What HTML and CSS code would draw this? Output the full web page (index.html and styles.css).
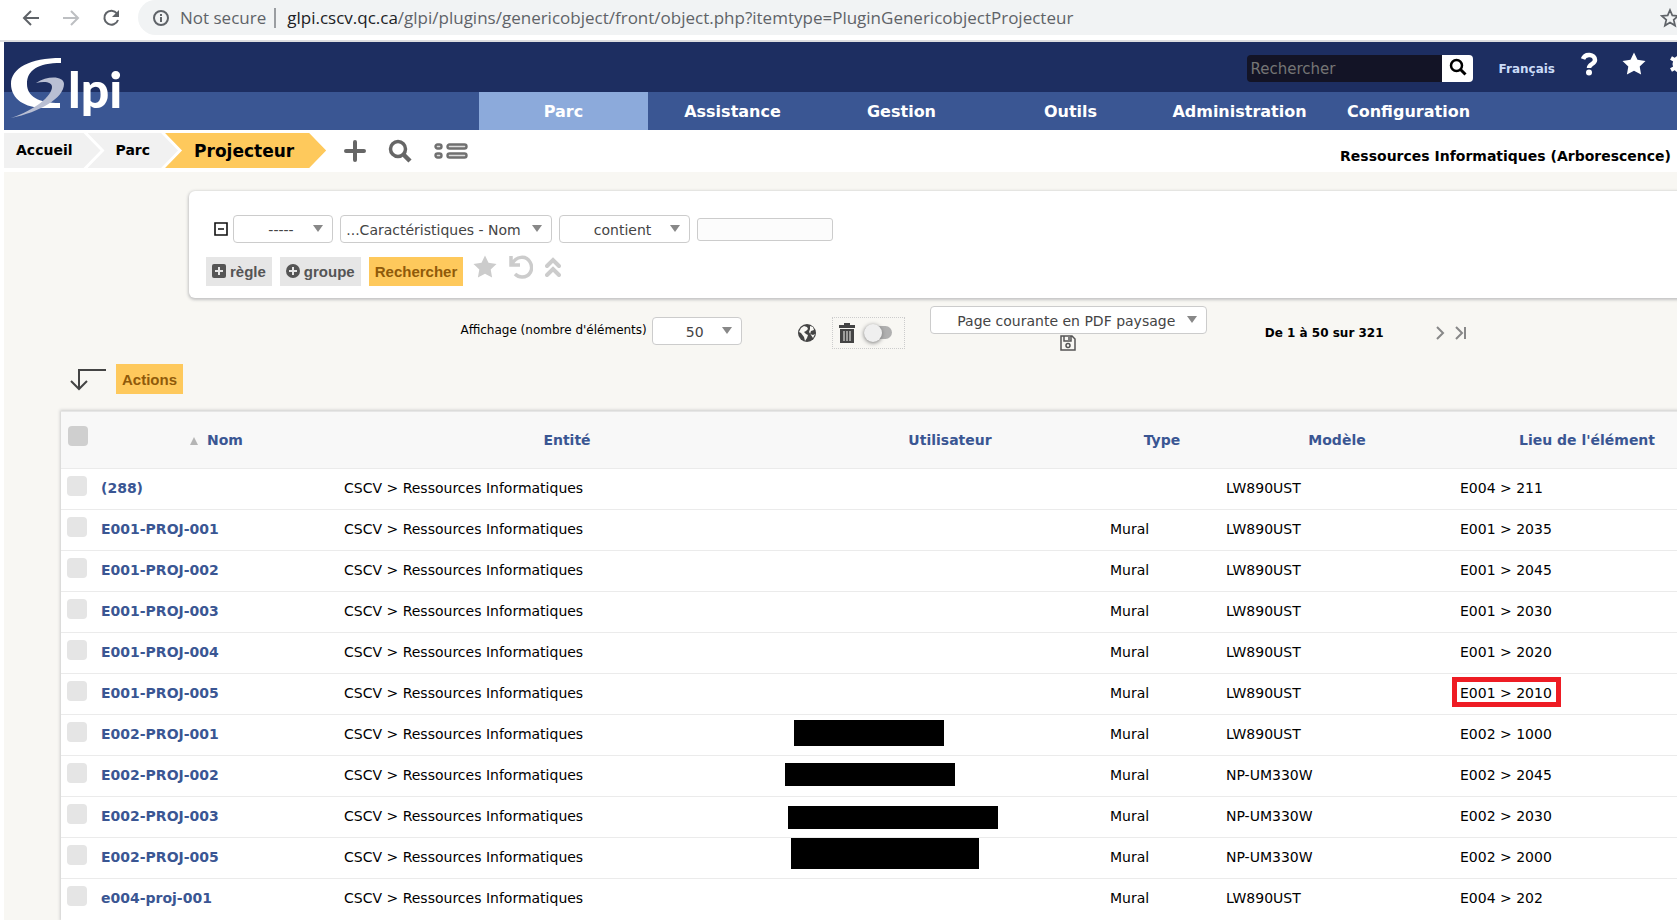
FILE: index.html
```html
<!DOCTYPE html>
<html lang="fr">
<head>
  <meta charset="UTF-8">
  <title>GLPI - Projecteur</title>
  <link rel="stylesheet" href="styles.css">
</head>
<body>
  <div class="browser-bar">
    <button class="browser-btn" aria-label="Back"><svg width="18" height="18" viewBox="0 0 18 18"><path d="M17 9H2M9 2L2 9l7 7" fill="none" stroke="#5f6368" stroke-width="2"/></svg></button>
    <button class="browser-btn" aria-label="Forward"><svg width="18" height="18" viewBox="0 0 18 18"><path d="M1 9h15M9 2l7 7-7 7" fill="none" stroke="#bdbfc2" stroke-width="2"/></svg></button>
    <button class="browser-btn" aria-label="Reload"><svg width="18" height="18" viewBox="0 0 18 18"><path d="M15 4.500A7 7 0 1 0 16 11" fill="none" stroke="#5f6368" stroke-width="2"/><path d="M17 1v7h-7z" fill="#5f6368"/></svg></button>
    <div class="address">
      <svg width="18" height="18" viewBox="0 0 18 18"><circle cx="9" cy="9" r="7" fill="none" stroke="#5f6368" stroke-width="2"/><path d="M9 8v5M9 5v2" stroke="#5f6368" stroke-width="2"/></svg>
      <span class="not-secure">Not secure</span>
      <span class="url"><b>glpi.cscv.qc.ca</b>/glpi/plugins/genericobject/front/object.php?itemtype=PluginGenericobjectProjecteur</span>
      <svg class="bookmark" width="20" height="20" viewBox="0 0 20 20"><path d="M10 2l2.300 5.400 5.900.500-4.500 3.900 1.400 5.800L10 14.500l-5.100 3.100 1.400-5.800L1.800 7.900l5.900-.5z" fill="none" stroke="#5f6368" stroke-width="1.700"/></svg>
    </div>
  </div>

  <div class="page">
    <header>
      <div class="top">
        <a href="#" class="logo" aria-label="GLPI">
          <svg width="120" height="66" viewBox="0 0 120 66">
            <path d="M51 2C20 2 1 12 1 28c0 15 14 24 33 24h16v-5C28 47 17 40 17 28 17 14 28 7 51 7z" fill="#fff"/>
            <path d="M26 27c12-8 28-7 28 1C54 42 30 56 1 62c24-8 41-22 41-31 0-5-7-6-16-4z" fill="#b9bfd3"/>
            <text x="58" y="52" class="logo-text">lpi</text>
          </svg>
        </a>
        <div class="tools">
          <form class="global-search">
            <input type="text" placeholder="Rechercher" aria-label="Rechercher">
            <button type="button" aria-label="Lancer la recherche"><svg width="18" height="18" viewBox="0 0 18 18"><circle cx="7.500" cy="7.500" r="5.500" fill="none" stroke="#000" stroke-width="2.500"/><path d="M11.500 11.500l5 5" stroke="#000" stroke-width="3"/></svg></button>
          </form>
          <a href="#" class="lang">Français</a>
          <a href="#" class="tool-icon help" aria-label="Aide"><svg width="18" height="24" viewBox="0 0 18 24"><path d="M3 7c2-6 12-5 12 1 0 4-6 4-6 8" fill="none" stroke="#fff" stroke-width="4.500"/><circle cx="9" cy="20.500" r="3" fill="#fff"/></svg></a>
          <a href="#" class="tool-icon" aria-label="Favoris"><svg width="24" height="24" viewBox="0 0 24 24"><path d="M12 .500l3.500 7.300 8 1.100-5.800 5.600 1.400 8L12 18.700l-7.100 3.800 1.400-8L.5 8.900l8-1.100z" fill="#fff"/></svg></a>
          <a href="#" class="tool-icon gear" aria-label="Préférences"><svg width="24" height="24" viewBox="0 0 24 24"><circle cx="12" cy="12" r="7" fill="none" stroke="#fff" stroke-width="5"/><path d="M12 0v24M1 6l22 12M1 18L23 6" stroke="#fff" stroke-width="4"/><circle cx="12" cy="12" r="4" fill="#1d2e61"/></svg></a>
        </div>
      </div>
      <nav class="menu">
        <a href="#" class="active">Parc</a>
        <a href="#">Assistance</a>
        <a href="#">Gestion</a>
        <a href="#">Outils</a>
        <a href="#">Administration</a>
        <a href="#">Configuration</a>
      </nav>
      <div class="crumb-bar">
        <a href="#" class="crumb crumb-first">Accueil</a>
        <a href="#" class="crumb">Parc</a>
        <a href="#" class="crumb crumb-current">Projecteur</a>
        <div class="crumb-icons">
          <a href="#" aria-label="Ajouter"><svg width="22" height="22" viewBox="0 0 22 22"><path d="M11 2v18M2 11h18" stroke="#666" stroke-width="4" stroke-linecap="round"/></svg></a>
          <a href="#" aria-label="Rechercher"><svg width="24" height="24" viewBox="0 0 24 24"><circle cx="10" cy="10" r="7.500" fill="none" stroke="#666" stroke-width="3.500"/><path d="M16 16l6 6" stroke="#666" stroke-width="4.500"/></svg></a>
          <a href="#" aria-label="Liste"><svg width="34" height="18" viewBox="0 0 34 18"><g fill="#ddd" stroke="#707070" stroke-width="2.400"><rect x="1.500" y="2.500" width="6" height="4" rx="2"/><rect x="13.500" y="2.500" width="19" height="4" rx="2"/><rect x="1.500" y="11.500" width="6" height="4" rx="2"/><rect x="13.500" y="11.500" width="19" height="4" rx="2"/></g></svg></a>
        </div>
        <a href="#" class="entity">Ressources Informatiques (Arborescence)</a>
      </div>
    </header>

    <main>
      <form class="criteria">
        <div class="criteria-row">
          <button type="button" class="minus" aria-label="Supprimer la règle"><svg width="14" height="14" viewBox="0 0 14 14"><path d="M1 1h12v12H1zM4 7h6" fill="none" stroke="#111" stroke-width="1.600"/></svg></button>
          <span class="dropdown w-link"><select aria-label="Lien"><option>-----</option></select></span>
          <span class="dropdown w-field"><select aria-label="Champ"><option>...Caractéristiques - Nom</option></select></span>
          <span class="dropdown w-type"><select aria-label="Type de recherche"><option>contient</option></select></span>
          <input type="text" class="value" aria-label="Valeur">
        </div>
        <div class="criteria-row">
          <button type="button" class="btn btn-grey"><svg width="14" height="14" viewBox="0 0 14 14"><rect width="14" height="14" rx="2" fill="#555"/><path d="M7 3v8M3 7h8" stroke="#e6e6e6" stroke-width="2"/></svg>règle</button>
          <button type="button" class="btn btn-grey"><svg width="14" height="14" viewBox="0 0 14 14"><circle cx="7" cy="7" r="7" fill="#555"/><path d="M7 3v8M3 7h8" stroke="#e6e6e6" stroke-width="2"/></svg>groupe</button>
          <button type="button" class="btn">Rechercher</button>
          <div class="criteria-icons">
            <a href="#" aria-label="Enregistrer"><svg width="24" height="24" viewBox="0 0 24 24"><path d="M12 .500l3.500 7.300 8 1.100-5.800 5.600 1.400 8L12 18.700l-7.100 3.800 1.400-8L.5 8.900l8-1.100z" fill="#ccc"/></svg></a>
            <a href="#" aria-label="Réinitialiser"><svg width="24" height="24" viewBox="0 0 24 24"><path d="M2 1v9h9M3 9C7 1 17 0 21 7s0 15-8 15c-3 0-5-1-7-3" fill="none" stroke="#ccc" stroke-width="3.500"/></svg></a>
            <a href="#" aria-label="Replier"><svg width="16" height="20" viewBox="0 0 16 20"><path d="M2 9l6-6 6 6M2 18l6-6 6 6" fill="none" stroke="#ccc" stroke-width="4" stroke-linecap="round"/></svg></a>
          </div>
        </div>
      </form>

      <div class="pager">
        <div class="page-size">
          <label for="limit">Affichage (nombre d'éléments)</label>
          <span class="dropdown w-limit"><select id="limit"><option>50</option></select></span>
        </div>
        <a href="#" class="globe" aria-label="Carte"><svg width="18" height="18" viewBox="0 0 18 18"><circle cx="9" cy="9" r="9" fill="#444"/><path d="M3 4l3-2 3 1 1 2-2 2-2 1 2 2 2 1-1 3-2 3-1-4-3-4-2-1zM12 2l3 1 1 3-3 1-1 3 3 1 2-1-2 4-2-3-2-3 1-3z" fill="#f8f7f3"/></svg></a>
        <label class="trash">
          <svg width="18" height="20" viewBox="0 0 18 20"><path d="M6 0h6v2h5v3H1V2h5zM2 6h14v14H2z" fill="#444"/><path d="M6 8v10M9 8v10M12 8v10" stroke="#f8f7f3"/></svg>
          <input type="checkbox" aria-label="Afficher la corbeille">
        </label>
        <div class="export">
          <span class="dropdown w-export"><select aria-label="Format d'export"><option>Page courante en PDF paysage</option></select></span>
          <button type="button" aria-label="Exporter"><svg width="16" height="16" viewBox="0 0 16 16"><path d="M1 1h11l3 3v11H1zM4 1v5h7V1M9 2v3" fill="none" stroke="#555" stroke-width="1.500"/><circle cx="8" cy="10.500" r="2" fill="none" stroke="#555" stroke-width="1.500"/></svg></button>
        </div>
        <b class="count">De 1 à 50 sur 321</b>
        <div class="arrows">
          <a href="#" aria-label="Suivant"><svg width="10" height="14" viewBox="0 0 10 14"><path d="M2 1l6 6-6 6" fill="none" stroke="#888" stroke-width="2"/></svg></a>
          <a href="#" aria-label="Fin"><svg width="12" height="14" viewBox="0 0 12 14"><path d="M1 1l6 6-6 6M10 1v12" fill="none" stroke="#888" stroke-width="2"/></svg></a>
        </div>
      </div>

      <div class="massive">
        <svg width="38" height="24" viewBox="0 0 38 24"><path d="M36 3H9v18M1 14l8 8 8-8" fill="none" stroke="#444" stroke-width="2"/></svg>
        <button type="button" class="btn">Actions</button>
      </div>

      <table class="results">
        <colgroup>
          <col class="c-check"><col class="c-name"><col class="c-entity"><col class="c-user"><col class="c-type"><col class="c-model"><col>
        </colgroup>
        <thead>
          <tr>
            <th><input type="checkbox" aria-label="Tout cocher"></th>
            <th><a href="#" class="sorted">Nom</a></th>
            <th><a href="#">Entité</a></th>
            <th><a href="#">Utilisateur</a></th>
            <th><a href="#">Type</a></th>
            <th><a href="#">Modèle</a></th>
            <th><a href="#">Lieu de l'élément</a></th>
          </tr>
        </thead>
        <tbody>
          <tr>
            <td><input type="checkbox" aria-label="(288)"></td>
            <td><a href="#">(288)</a></td>
            <td>CSCV &gt; Ressources Informatiques</td>
            <td></td>
            <td></td>
            <td>LW890UST</td>
            <td>E004 &gt; 211</td>
          </tr>
          <tr>
            <td><input type="checkbox" aria-label="E001-PROJ-001"></td>
            <td><a href="#">E001-PROJ-001</a></td>
            <td>CSCV &gt; Ressources Informatiques</td>
            <td></td>
            <td>Mural</td>
            <td>LW890UST</td>
            <td>E001 &gt; 2035</td>
          </tr>
          <tr>
            <td><input type="checkbox" aria-label="E001-PROJ-002"></td>
            <td><a href="#">E001-PROJ-002</a></td>
            <td>CSCV &gt; Ressources Informatiques</td>
            <td></td>
            <td>Mural</td>
            <td>LW890UST</td>
            <td>E001 &gt; 2045</td>
          </tr>
          <tr>
            <td><input type="checkbox" aria-label="E001-PROJ-003"></td>
            <td><a href="#">E001-PROJ-003</a></td>
            <td>CSCV &gt; Ressources Informatiques</td>
            <td></td>
            <td>Mural</td>
            <td>LW890UST</td>
            <td>E001 &gt; 2030</td>
          </tr>
          <tr>
            <td><input type="checkbox" aria-label="E001-PROJ-004"></td>
            <td><a href="#">E001-PROJ-004</a></td>
            <td>CSCV &gt; Ressources Informatiques</td>
            <td></td>
            <td>Mural</td>
            <td>LW890UST</td>
            <td>E001 &gt; 2020</td>
          </tr>
          <tr>
            <td><input type="checkbox" aria-label="E001-PROJ-005"></td>
            <td><a href="#">E001-PROJ-005</a></td>
            <td>CSCV &gt; Ressources Informatiques</td>
            <td></td>
            <td>Mural</td>
            <td>LW890UST</td>
            <td>E001 &gt; 2010<span class="highlight"></span></td>
          </tr>
          <tr>
            <td><input type="checkbox" aria-label="E002-PROJ-001"></td>
            <td><a href="#">E002-PROJ-001</a></td>
            <td>CSCV &gt; Ressources Informatiques</td>
            <td><span class="mask mask-1"></span></td>
            <td>Mural</td>
            <td>LW890UST</td>
            <td>E002 &gt; 1000</td>
          </tr>
          <tr>
            <td><input type="checkbox" aria-label="E002-PROJ-002"></td>
            <td><a href="#">E002-PROJ-002</a></td>
            <td>CSCV &gt; Ressources Informatiques</td>
            <td><span class="mask mask-2"></span></td>
            <td>Mural</td>
            <td>NP-UM330W</td>
            <td>E002 &gt; 2045</td>
          </tr>
          <tr>
            <td><input type="checkbox" aria-label="E002-PROJ-003"></td>
            <td><a href="#">E002-PROJ-003</a></td>
            <td>CSCV &gt; Ressources Informatiques</td>
            <td><span class="mask mask-3"></span></td>
            <td>Mural</td>
            <td>NP-UM330W</td>
            <td>E002 &gt; 2030</td>
          </tr>
          <tr>
            <td><input type="checkbox" aria-label="E002-PROJ-005"></td>
            <td><a href="#">E002-PROJ-005</a></td>
            <td>CSCV &gt; Ressources Informatiques</td>
            <td><span class="mask mask-4"></span></td>
            <td>Mural</td>
            <td>NP-UM330W</td>
            <td>E002 &gt; 2000</td>
          </tr>
          <tr>
            <td><input type="checkbox" aria-label="e004-proj-001"></td>
            <td><a href="#">e004-proj-001</a></td>
            <td>CSCV &gt; Ressources Informatiques</td>
            <td></td>
            <td>Mural</td>
            <td>LW890UST</td>
            <td>E004 &gt; 202</td>
          </tr>
        </tbody>
      </table>
    </main>
  </div>
</body>
</html>
```
FILE: styles.css
```css
* { box-sizing: border-box; }
html { overflow: hidden; }
body { margin: 0; background: #fff; font-family: "DejaVu Sans", Verdana, sans-serif; font-size: 14px; color: #000; overflow: hidden; }
a { color: inherit; text-decoration: none; }
button { border: none; background: none; padding: 0; cursor: pointer; }
svg { display: block; flex: none; }

/* browser toolbar */
.browser-bar { display: flex; align-items: center; height: 42px; padding: 0 0 5px 22px; border-bottom: 2px solid #dcdde0; font-family: "Open Sans", "Noto Sans", sans-serif; font-size: 17px; }
.browser-btn { margin-right: 22px; }
.browser-btn + .browser-btn + .browser-btn { margin-right: 18px; }
.address { display: flex; flex: 1; align-items: center; height: 35px; padding-left: 14px; background: #f1f3f4; border-radius: 18px 0 0 18px; color: #5f6368; white-space: nowrap; }
.not-secure { margin-left: 10px; padding-right: 8px; border-right: 2px solid #9a9da1; line-height: 20px; }
.url { margin-left: 11px; }
.url b { font-weight: normal; color: #202124; }
.bookmark { margin-left: auto; margin-right: -3px; }

/* header */
.page { margin-left: 4px; background: #f8f7f3; min-height: calc(100vh - 42px); overflow: hidden; }
.top { display: flex; justify-content: space-between; height: 50px; background: #1d2e61; }
.logo { padding: 14px 0 0 6px; z-index: 1; }
.logo-text { font: 900 50px Lato, sans-serif; fill: #fff; }
.tools { display: flex; align-items: center; height: 50px; margin-right: -17px; padding-top: 3px; }
.global-search { display: flex; height: 27px; margin-right: 26px; border-radius: 4px; overflow: hidden; }
.global-search input { width: 195px; border: none; padding: 0 4px; background: #131426; color: #ccc; font: 15px "DejaVu Sans", sans-serif; }
.global-search input::placeholder { color: #757575; }
.global-search button { width: 31px; background: #fff; padding: 0 0 4px 7px; }
.lang { margin-right: 25px; font-size: 12px; font-weight: bold; color: #cbdcf8; }
.tool-icon { margin-bottom: 9px; margin-right: 24px; }
.gear { margin-right: 0; }
.menu { display: flex; justify-content: center; height: 38px; padding-left: 306px; padding-right: 15px; background: #3a5693; }
.menu a { width: 169px; line-height: 39px; text-align: center; color: #fff; font-size: 16px; font-weight: bold; }
.menu a.active { background: #8caadb; }

/* breadcrumb */
.crumb-bar { display: flex; align-items: center; height: 42px; padding: 3px 6px 4px 0; background: #fff; font-weight: bold; }
.crumb { height: 35px; margin-left: -13px; padding: 0 28px; line-height: 34px; background: #f1f1f1; clip-path: polygon(0 0, calc(100% - 17px) 0, 100% 50%, calc(100% - 17px) 100%, 0 100%, 17px 50%); }
.crumb-first { margin-left: 0; padding: 0 28px 0 12px; clip-path: polygon(0 0, calc(100% - 17px) 0, 100% 50%, calc(100% - 17px) 100%, 0 100%); }
.crumb-current { padding: 0 32px 0 29px; line-height: 37px; font-size: 17px; background: #fec95c; }
.crumb-icons { display: flex; align-items: center; gap: 22px; margin-left: 18px; }
.entity { margin-left: auto; padding-top: 10px; }

/* form controls */
.dropdown { position: relative; display: inline-block; height: 28px; }
.dropdown::after { content: ""; position: absolute; right: 10px; top: 10px; border: 5px solid transparent; border-top: 7px solid #888; border-bottom: none; pointer-events: none; }
.dropdown select { appearance: none; width: 100%; height: 100%; padding: 2px 24px 0 20px; border: 1px solid #ccc; border-radius: 4px; background: #fff; color: #444; font: inherit; text-align: center; text-align-last: center; }
.w-link { width: 100px; }
.w-field { width: 212px; }
.w-field select { padding: 2px 28px 0 3px; }
.w-type { width: 131px; }
.w-limit { width: 90px; }
.w-export { width: 277px; }
.btn { display: flex; align-items: center; gap: 4px; height: 29px; padding: 0 6px; background: #fec95c; color: #8f5a0a; font: bold 15px "Liberation Sans", Arial, sans-serif; }
.btn-grey { background: #e6e6e6; color: #555; }

/* search criteria */
.criteria { display: flex; flex-direction: column; gap: 12px; height: 107px; margin: 19px -56px 0 185px; padding: 24px 17px 0; background: #fff; border-radius: 6px; box-shadow: 0 1px 3px 1px #c4c4c4; }
.criteria-row { display: flex; align-items: center; gap: 8px; }
.criteria-row .dropdown { margin-right: -1px; }
.minus { margin-left: 8px; margin-right: -3px; }
.value { width: 136px; height: 23px; border: 1px solid #ccc; border-radius: 3px; background: #fcfcfc; }
.criteria-icons { display: flex; align-items: center; gap: 12px; margin-left: 2px; padding-bottom: 8px; }

/* pager */
.pager { display: flex; justify-content: center; align-items: center; margin: 8px -56px 0 190px; white-space: nowrap; }
.page-size { display: flex; align-items: center; gap: 5px; padding-bottom: 4px; }
.page-size label { padding-bottom: 2px; font-size: 12px; }
.globe { margin-left: 56px; }
.trash { display: flex; align-items: center; gap: 8px; width: 73px; height: 32px; margin-left: 16px; padding-left: 5px; border: 1px dotted #ccc; }
.trash input { appearance: none; position: relative; width: 28px; height: 13px; margin: 0; background: #b0b0b0; border-radius: 7px; }
.trash input::before { content: ""; position: absolute; left: 0; top: -2px; width: 18px; height: 18px; border-radius: 50%; background: #efefef; box-shadow: 0 1px 4px #777; }
.export { display: flex; flex-direction: column; align-items: center; gap: 1px; margin-left: 25px; padding-bottom: 8px; }
.count { margin-left: 58px; font-size: 12px; }
.arrows { display: flex; gap: 10px; margin-left: 51px; }

/* massive actions */
.massive { display: flex; align-items: center; gap: 8px; margin: 5px 0 17px 66px; }
.massive .btn { height: 30px; padding: 0 6px; }

/* results table, runs past the right edge */
.results { width: calc(100% - 14px); margin-left: 57px; table-layout: fixed; border-collapse: collapse; background: #fff; border-top: 1px solid #e6e6e6; box-shadow: 0 0 3px 1px #ccc; }
.c-check { width: 34px; }
.c-name { width: 243px; }
.c-entity { width: 458px; }
.c-user { width: 308px; }
.c-type { width: 116px; }
.c-model { width: 234px; }
.results th { height: 57px; padding: 0 6px; background: #f8f8f8; color: #3a5693; }
.results td { position: relative; height: 41px; padding: 0 6px 2px; border-top: 1px solid #ebebeb; white-space: nowrap; }
.results td a { color: #3a5693; font-weight: bold; }
.results input { appearance: none; display: block; width: 20px; height: 20px; margin: 0 0 5px; border-radius: 4px; background: #e5e5e5; }
.results th input { margin: 0 0 9px 1px; background: #cfcfcf; }
.sorted::before { content: ""; display: inline-block; margin-right: 9px; border: 4px solid transparent; border-bottom: 8px solid #b5b5b5; border-top: none; }

/* overlays on cells */
.mask { position: absolute; background: #000; }
.mask-1 { left: -2px; top: 5px; width: 150px; height: 26px; }
.mask-2 { left: -11px; top: 7px; width: 170px; height: 23px; }
.mask-3 { left: -8px; top: 9px; width: 210px; height: 23px; }
.mask-4 { left: -5px; top: 0; width: 188px; height: 31px; }
.highlight { position: absolute; left: -2px; top: 3px; width: 109px; height: 30px; border: 5px solid #ee1c24; }
```
